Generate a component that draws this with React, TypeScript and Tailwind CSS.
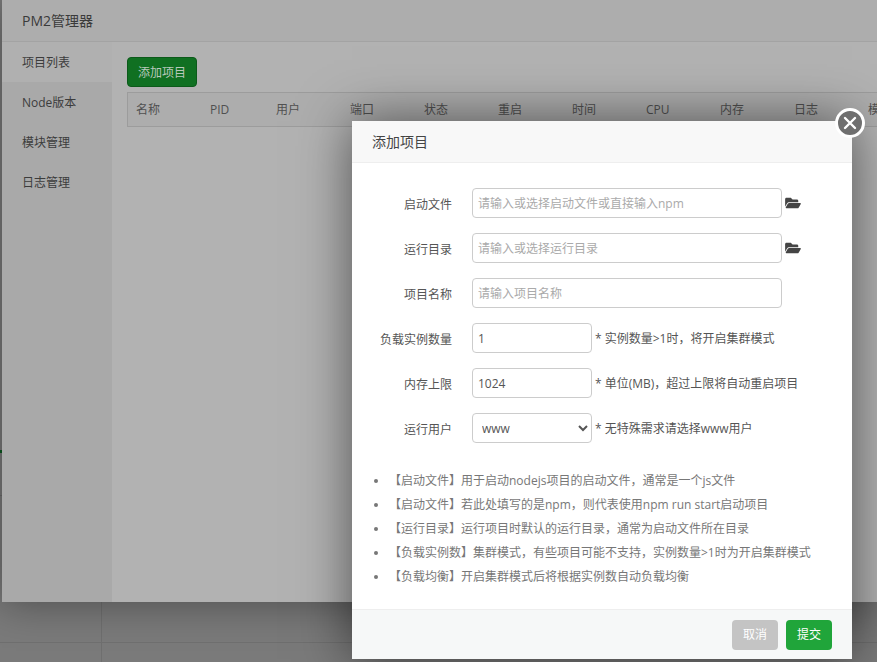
import { FaFolderOpen } from "react-icons/fa";

const font = { fontFamily: '"Open Sans", "Noto Sans CJK SC", sans-serif' };

const menu = ["项目列表", "Node版本", "模块管理", "日志管理"];
const columns = [
  { name: "名称", w: "w-[74px]" },
  { name: "PID", w: "w-[66px]" },
  { name: "用户", w: "w-[74px]" },
  { name: "端口", w: "w-[74px]" },
  { name: "状态", w: "w-[74px]" },
  { name: "重启", w: "w-[74px]" },
  { name: "时间", w: "w-[74px]" },
  { name: "CPU", w: "w-[74px]" },
  { name: "内存", w: "w-[74px]" },
  { name: "日志", w: "w-[74px]" },
  { name: "模块", w: "w-[74px]" },
];
const notes = [
  "【启动文件】用于启动nodejs项目的启动文件，通常是一个js文件",
  "【启动文件】若此处填写的是npm，则代表使用npm run start启动项目",
  "【运行目录】运行项目时默认的运行目录，通常为启动文件所在目录",
  "【负载实例数】集群模式，有些项目可能不支持，实例数量>1时为开启集群模式",
  "【负载均衡】开启集群模式后将根据实例数自动负载均衡",
];

function Row({ label, children }: { label: string; children: React.ReactNode }) {
  return (
    <div className="flex h-[30px] items-center">
      <label className="w-[120px] pr-5 pt-[3px] text-right text-xs text-[#555]">{label}</label>
      {children}
    </div>
  );
}

const inputClass =
  "h-[30px] rounded-sm border border-[#ccc] bg-white px-[5px] text-xs text-[#555] outline-none placeholder:text-[#aaa]";

function Hint({ text }: { text: string }) {
  return <span className="ml-[3px] pt-px text-xs text-[#555]">{text}</span>;
}

function Folder() {
  return <FaFolderOpen className="ml-[3px] h-[14px] w-4 text-[#444]" />;
}

export default function App() {
  return (
    <div className="relative h-[662px] w-[877px] overflow-hidden bg-[#7a7a7a]" style={font}>
      {/* page behind the layer */}
      <div className="absolute left-0 top-[642px] h-px w-full bg-[#6f6f6f]" />
      <div className="absolute left-[101px] top-[600px] h-[62px] w-px bg-[#6f6f6f]" />
      <div className="absolute left-0 top-[450px] h-[3px] w-[2px] bg-[#0a5a20]" />
      <div className="absolute left-0 top-[495px] h-px w-[2px] bg-[#6c6c6c]" />

      {/* PM2 window */}
      <div className="absolute left-[2px] top-0 flex h-[602px] w-[875px] flex-col bg-[#b2b2b2] shadow-[0_0_40px_rgba(0,0,0,0.4)]">
        <div className="flex h-[42px] shrink-0 items-center border-b border-[#a3a3a3] bg-[#adadad] pl-5 text-sm text-[#3a3a3a]">
          PM2管理器
        </div>
        <div className="flex min-h-0 flex-1">
          <div className="w-[110px] shrink-0 bg-[#a9a9a9]">
            {menu.map((m, i) => (
              <div
                key={m}
                className={`flex h-10 items-center pl-5 pt-0.5 text-xs text-[#3c3c3c] ${i === 0 ? "bg-[#b0b0b0]" : ""}`}
              >
                {m}
              </div>
            ))}
          </div>
          <div className="min-w-0 flex-1 overflow-hidden pl-[15px] pt-[15px]">
            <button className="h-[30px] w-[70px] rounded-sm border border-[#0c5a1a] bg-[#107022] pt-0.5 text-xs text-[#b9c9bc]">
              添加项目
            </button>
            <div className="mt-[5px] flex h-[35px] w-[900px] items-center border border-[#9c9c9c] bg-[#adadad] pl-2 text-xs text-[#505050]">
              {columns.map((c) => (
                <div key={c.name} className={`${c.w} shrink-0`}>
                  {c.name}
                </div>
              ))}
            </div>
          </div>
        </div>
      </div>

      {/* dialog */}
      <div className="absolute left-[352px] top-[121px] flex h-[538px] w-[500px] flex-col bg-white shadow-[0_0_50px_rgba(0,0,0,0.55)]">
        <div className="flex h-[42px] shrink-0 items-center border-b border-[#eee] bg-[#f8f8f8] pl-5 text-sm text-[#444]">
          添加项目
        </div>
        <div className="flex-1">
          <div className="flex flex-col gap-[15px] pt-[25px]">
            <Row label="启动文件">
              <input className={`${inputClass} w-[310px]`} placeholder="请输入或选择启动文件或直接输入npm" />
              <Folder />
            </Row>
            <Row label="运行目录">
              <input className={`${inputClass} w-[310px]`} placeholder="请输入或选择运行目录" />
              <Folder />
            </Row>
            <Row label="项目名称">
              <input className={`${inputClass} w-[310px]`} placeholder="请输入项目名称" />
            </Row>
            <Row label="负载实例数量">
              <input className={`${inputClass} w-[120px]`} defaultValue="1" />
              <Hint text="* 实例数量>1时，将开启集群模式" />
            </Row>
            <Row label="内存上限">
              <input className={`${inputClass} w-[120px]`} defaultValue="1024" />
              <Hint text="* 单位(MB)，超过上限将自动重启项目" />
            </Row>
            <Row label="运行用户">
              <select className="h-[30px] w-[120px] rounded-sm border border-[#ccc] bg-white pl-[5px] text-xs text-[#555] outline-none">
                <option>www</option>
              </select>
              <Hint text="* 无特殊需求请选择www用户" />
            </Row>
          </div>
          <ul className="mt-[26px] list-disc pl-[37px] text-xs leading-6 text-[#777] marker:text-[#777]">
            {notes.map((n) => (
              <li key={n}>{n}</li>
            ))}
          </ul>
        </div>
        <div className="flex h-[50px] shrink-0 items-center justify-end gap-2 border-t border-[#eee] bg-[#f6f8f8] pr-5">
          <button className="h-[30px] w-[46px] rounded-sm bg-[#c4c4c4] text-xs text-white">取消</button>
          <button className="h-[30px] w-[46px] rounded-sm bg-[#20a53a] text-xs text-white">提交</button>
        </div>
      </div>

      {/* close button */}
      <button className="absolute left-[835px] top-[108px] flex h-[30px] w-[30px] items-center justify-center rounded-full border-[3px] border-white bg-[#6f6f6f]">
        <svg viewBox="0 0 14 14" className="h-[14px] w-[14px]">
          <path d="M2 2 L12 12 M12 2 L2 12" stroke="#fff" strokeWidth="2.4" strokeLinecap="round" />
        </svg>
      </button>
    </div>
  );
}
